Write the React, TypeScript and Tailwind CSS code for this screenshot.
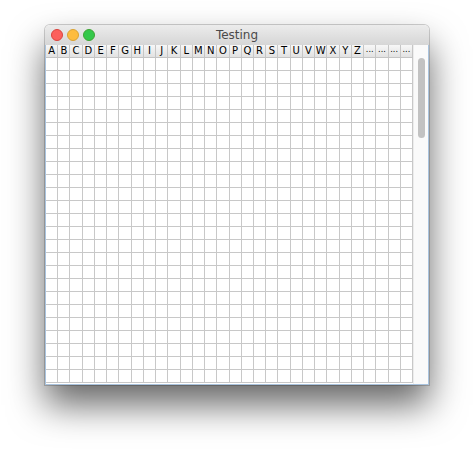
const columns = [
  ..."ABCDEFGHIJKLMNOPQRSTUVWXYZ".split(""),
  "...",
  "...",
  "...",
  "...",
];

const ROWS = 25;

function TrafficLights() {
  return (
    <div className="flex items-center gap-[4px] pl-[6px]">
      <span className="h-[12px] w-[12px] rounded-full border border-[#d9433c] bg-[#fc605c]" />
      <span className="h-[12px] w-[12px] rounded-full border border-[#d9a233] bg-[#fdbc40]" />
      <span className="h-[12px] w-[12px] rounded-full border border-[#3ea434] bg-[#34c84a]" />
    </div>
  );
}

function HeaderRow() {
  return (
    <div className="grid h-[13px] grid-cols-[repeat(30,minmax(0,1fr))] border-b border-[#c4c4c4] bg-gradient-to-b from-[#f7f7f7] to-[#e2e2e2]">
      {columns.map((c, i) => (
        <div
          key={i}
          className="flex items-center justify-center border-r border-[#c6c6c6] text-[10px] leading-none text-black"
        >
          {c === "..." ? <span className="-mt-[2px] text-[8px]">...</span> : c}
        </div>
      ))}
    </div>
  );
}

function Grid() {
  const cells = [];
  for (let r = 0; r < ROWS; r++) {
    for (let c = 0; c < columns.length; c++) {
      cells.push(
        <div key={`${r}-${c}`} className="h-[13px] border-r border-b border-[#c8c8c8] bg-white" />
      );
    }
  }
  return <div className="grid grid-cols-[repeat(30,minmax(0,1fr))]">{cells}</div>;
}

export default function App() {
  return (
    <div
      className="h-[451px] w-[474px] overflow-hidden bg-white pl-[45px] pt-[25px]"
      style={{ fontFamily: '"DejaVu Sans", "Liberation Sans", sans-serif' }}
    >
      <div className="flex h-[360px] w-[384px] flex-col overflow-hidden rounded-t-[5px] shadow-[0_20px_36px_rgba(0,0,0,0.6),0_0_0_1px_rgba(0,0,0,0.18)]">
        {/* title bar */}
        <div className="relative flex h-[20px] shrink-0 items-center bg-gradient-to-b from-[#ececec] to-[#d6d6d6]">
          <TrafficLights />
          <span className="absolute inset-x-0 top-0 text-center text-[12px] leading-[21px] text-[#4a4a4a]">
            Testing
          </span>
        </div>

        {/* table body */}
        <div className="flex min-h-0 flex-1 border-x border-b border-[#a9c3de] bg-white">
          <div className="w-[367px] shrink-0 overflow-hidden">
            <HeaderRow />
            <Grid />
          </div>
          <div className="flex flex-1 flex-col border-l border-[#ececec] bg-[#fafafa] pt-[13px]">
            <div className="mx-auto h-[80px] w-[7px] rounded-full bg-[#c2c2c2]" />
          </div>
        </div>
      </div>
    </div>
  );
}
